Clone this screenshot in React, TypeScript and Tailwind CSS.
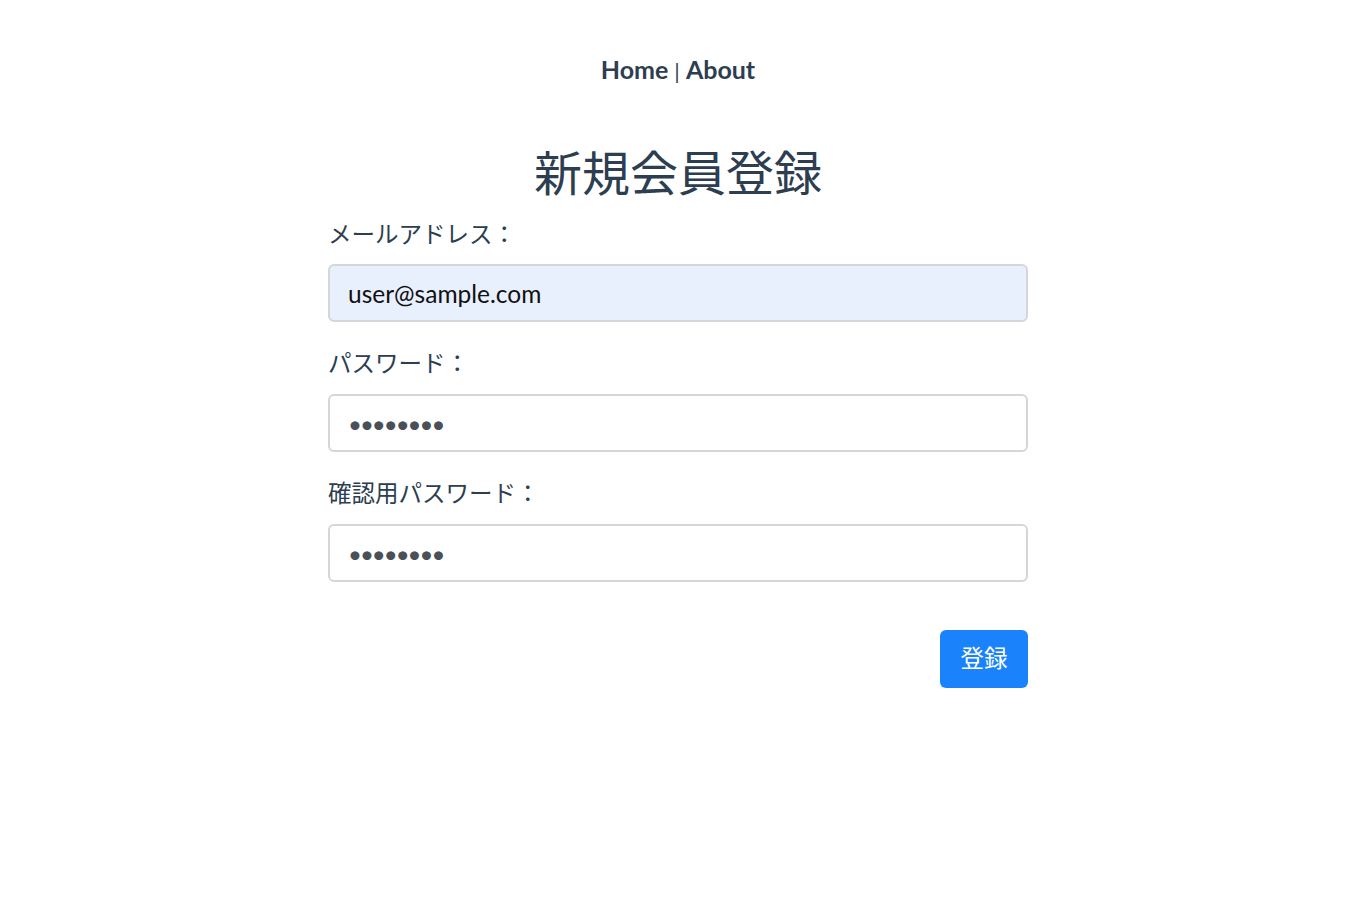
import { useState } from "react";

const FONT = "font-['Lato','Noto_Sans_CJK_JP',sans-serif]";

export default function App() {
  const [email, setEmail] = useState("user@sample.com");
  const [password, setPassword] = useState("password");
  const [confirm, setConfirm] = useState("password");

  return (
    <div className={`min-h-screen bg-white pl-[6px] text-[#2c3e50] ${FONT}`}>
      <nav className="pt-[51px] text-center text-[25px] leading-[36px] font-bold">
        <a className="text-[#2c3e50]">Home</a>
        <span className="mx-[6px] font-normal text-[22px]">|</span>
        <a className="text-[#2c3e50]">About</a>
      </nav>

      <h1 className="mt-[55px] text-center text-[48px] leading-[58px] font-normal">新規会員登録</h1>

      <form className="mx-auto mt-[14px] w-[700px]" onSubmit={e => e.preventDefault()}>
        <label className="block text-[23.5px] leading-[36px]">メールアドレス：</label>
        <input
          className="mt-[12px] block h-[58px] w-full rounded-[6px] border-2 border-[#d3d6da] bg-[#e8f0fe] px-[18px] text-[24.5px] text-[#111] outline-none"
          value={email}
          onChange={e => setEmail(e.target.value)}
          type="email"
        />

        <label className="mt-[23px] block text-[23.5px] leading-[36px]">パスワード：</label>
        <input
          className="mt-[13px] block h-[58px] w-full rounded-[6px] border-2 border-[#d3d6da] bg-white px-[18px] text-[24px] tracking-[-2px] text-[#495057] outline-none"
          value={password}
          onChange={e => setPassword(e.target.value)}
          type="password"
        />

        <label className="mt-[23px] block text-[23.5px] leading-[36px]">確認用パスワード：</label>
        <input
          className="mt-[13px] block h-[58px] w-full rounded-[6px] border-2 border-[#d3d6da] bg-white px-[18px] text-[24px] tracking-[-2px] text-[#495057] outline-none"
          value={confirm}
          onChange={e => setConfirm(e.target.value)}
          type="password"
        />

        <div className="mt-[48px] flex justify-end">
          <button className="h-[58px] w-[88px] rounded-[6px] bg-[#1a82fb] text-[23.5px] text-white">登録</button>
        </div>
      </form>
    </div>
  );
}
